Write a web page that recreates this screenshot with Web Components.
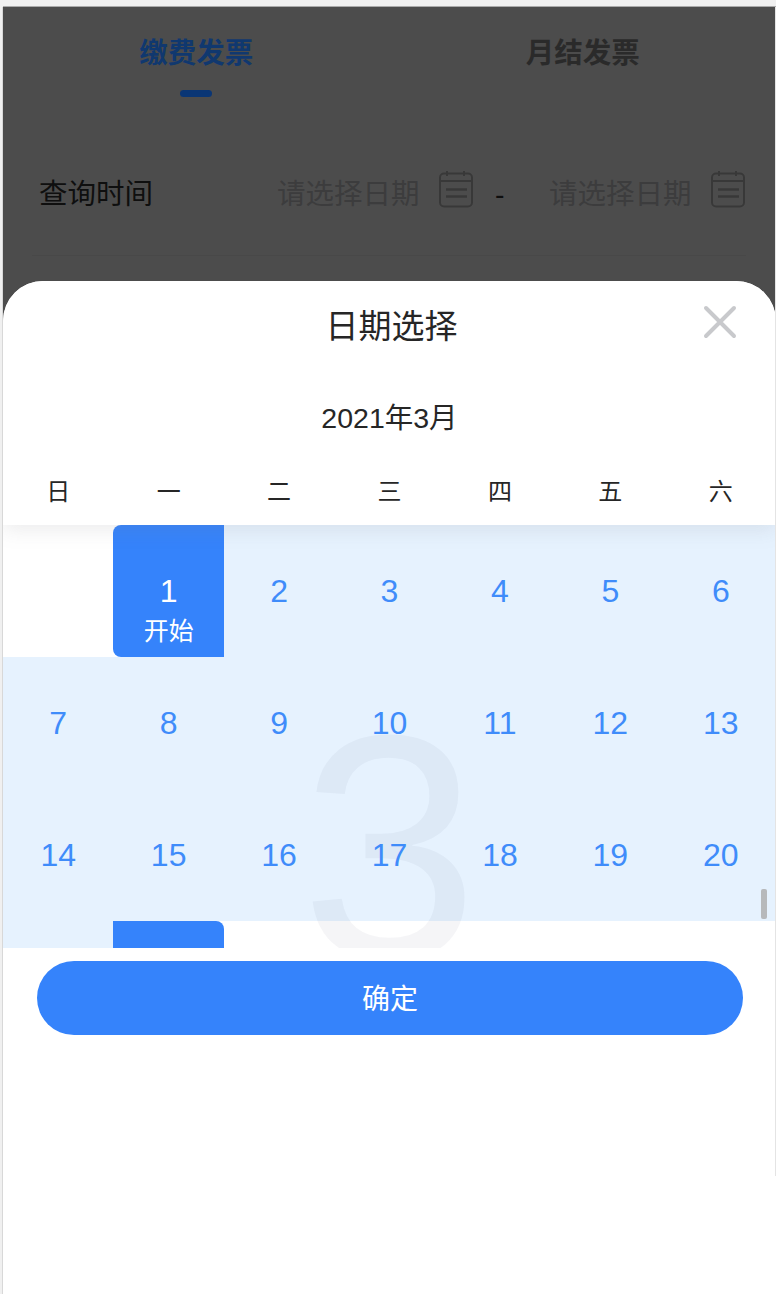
<!DOCTYPE html>
<html lang="zh"><head><meta charset="utf-8"><title>发票</title>
<style>
html,body{margin:0;padding:0;height:1294px;overflow:hidden;background:#f0f0f0;font-family:"Liberation Sans","Noto Sans CJK SC",sans-serif}
</style></head><body>
<invoice-page>
  <invoice-tabs></invoice-tabs>
  <query-row></query-row>
  <calendar-popup slot="overlay"></calendar-popup>
</invoice-page>
<script>
const FONT='"Liberation Sans","Noto Sans CJK SC",sans-serif';
class Base extends HTMLElement{
  constructor(){super();this.attachShadow({mode:'open'}).innerHTML=this.constructor.html;}
}
class InvoicePage extends Base{static html=`<style>
:host{display:block;box-sizing:border-box;height:1294px;padding:7px 0 0 3px;position:relative;font-family:${FONT}}
.sheet{position:relative;height:1287px;background:#fff;box-shadow:0 -1px 0 #aaa,-1px 0 0 #d8d8d8}
.mask{position:absolute;inset:0;background:rgba(0,0,0,.7)}
.edge{position:absolute;right:0;top:0;width:1px;height:1169px;background:#e4e4e4;z-index:3}
</style><div class="sheet"><slot></slot><div class="mask"></div><slot name="overlay"></slot><div class="edge"></div></div>`}
class InvoiceTabs extends Base{static html=`<style>
:host{display:flex;height:128px;position:relative;z-index:1}
.tab{flex:1;position:relative;display:flex;justify-content:center;padding-top:24px;box-sizing:border-box;font-size:28.500px;font-weight:700;line-height:44px;color:#2a2a2a}
.on{color:#10386f}
.on::after{content:"";position:absolute;left:50%;top:83px;width:32px;height:7px;margin-left:-16px;border-radius:4px;background:#0a3675}
</style><div class="tab on">缴费发票</div><div class="tab">月结发票</div>`}
const ICON=`<svg width="34" height="38" viewBox="0 0 34 38" fill="none" stroke="currentColor" stroke-width="2"><rect x="1" y="3.500" width="32" height="33" rx="4"/><path d="M1 11H33M8 1V6M25 1V6"/><path d="M7 19.500H28M7 26.500H28" stroke-width="2.400"/></svg>`;
class DateField extends Base{static html=`<style>
:host{display:flex;flex:none;align-items:center;gap:19px;font-size:28.500px;color:#c8c9cc;white-space:nowrap}
svg{display:block;flex:none;color:#bdbdbd;margin-bottom:10px}
span{line-height:40px}
</style><span>请选择日期</span>${ICON}`}
class QueryRow extends Base{static html=`<style>
:host{display:flex;align-items:center;box-sizing:border-box;height:121px;margin:0 30px 0 29px;padding:0 1px 2px 7px;border-bottom:1px solid #f0f0f0;font-size:28.500px;color:#323233}
.label{flex:none;width:238px;line-height:40px;white-space:nowrap}
.dash{flex:none;width:76.500px;padding-left:22.500px;box-sizing:border-box;line-height:40px}
</style><span class="label">查询时间</span><date-field></date-field><span class="dash">-</span><date-field></date-field>`}
class CalDay extends Base{static html=`<style>
:host{display:flex;align-items:center;justify-content:center;position:relative;height:132px;box-sizing:border-box;font-size:32px;color:#3f8cfa;background:rgba(30,140,245,.11)}
:host([blank]){background:transparent}
:host([start]),:host([end]){background:#3583fb;color:#fff}
:host([start]){border-radius:8px 0 0 8px}
:host([end]){border-radius:0 8px 8px 0}
.tag{position:absolute;left:0;right:0;top:91px;text-align:center;font-size:25px;line-height:30px}
</style><slot></slot><div class="tag"></div>`;
  connectedCallback(){const t=this.getAttribute('tag');if(t)this.shadowRoot.querySelector('.tag').textContent=t;}
}
class CalMonth extends Base{static html=`<style>
:host{display:block;position:relative;height:660px}
.mark{position:absolute;left:50%;top:calc(50% - 8px);transform:translate(-50%,-50%);font-size:320px;line-height:1;color:rgba(242,243,245,.8)}
.grid{position:relative;display:grid;grid-template-columns:repeat(7,1fr);grid-auto-rows:132px}
</style><div class="mark">3</div><div class="grid"><slot></slot></div>`;
  connectedCallback(){
    let h='<cal-day blank></cal-day>';
    for(let d=1;d<=20;d++)h+=d==1?`<cal-day start tag="开始">1</cal-day>`:`<cal-day>${d}</cal-day>`;
    h+='<cal-day></cal-day><cal-day end></cal-day>';
    this.innerHTML=h;
  }
}
class CalendarPopup extends Base{static html=`<style>
:host{display:flex;flex-direction:column;position:absolute;left:0;right:0;bottom:0;z-index:2;height:1013px;background:#fff;border-radius:40px 40px 0 0;color:#262626;overflow:hidden}
header{position:relative;z-index:1;box-shadow:0 4px 20px rgba(125,126,128,.16);background:#fff}
.title{height:88px;line-height:92px;text-align:center;font-size:33px;padding-left:4px}
.close{position:absolute;right:39px;top:24px;display:block}
.month{height:92px;line-height:98px;text-align:center;font-size:28.500px}
.week{display:grid;grid-template-columns:repeat(7,1fr);height:64px;line-height:62px;text-align:center;font-size:24px}
.body{position:relative;height:423px;overflow:hidden}
.bar{position:absolute;right:9px;top:364px;width:6px;height:30px;border-radius:2px;background:#b7b9bb}
footer{padding:13px 33px 0 34px}
.btn{height:74px;line-height:78px;border-radius:37px;background:#3583fb;color:#fff;text-align:center;font-size:28px}
</style><header>
<div class="title">日期选择</div>
<svg class="close" width="34" height="34" viewBox="0 0 34 34" stroke="#c8c9cc" stroke-width="4" fill="none" stroke-linecap="round"><path d="M3 3 31 31M31 3 3 31"/></svg>
<div class="month">2021年3月</div>
<div class="week"><span>日</span><span>一</span><span>二</span><span>三</span><span>四</span><span>五</span><span>六</span></div>
</header>
<div class="body"><cal-month></cal-month><div class="bar"></div></div>
<footer><div class="btn">确定</div></footer>`}
customElements.define('invoice-page',InvoicePage);
customElements.define('invoice-tabs',InvoiceTabs);
customElements.define('date-field',DateField);
customElements.define('query-row',QueryRow);
customElements.define('cal-day',CalDay);
customElements.define('cal-month',CalMonth);
customElements.define('calendar-popup',CalendarPopup);
</script>
</body></html>
